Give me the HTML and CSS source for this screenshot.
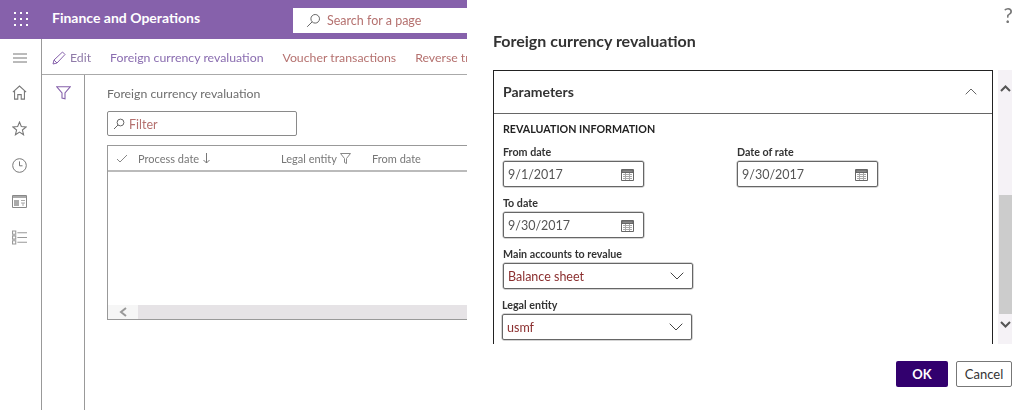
FILE: index.html
```html
<!DOCTYPE html>
<html lang="en">
<head>
<meta charset="utf-8">
<title>Foreign currency revaluation</title>
<link rel="stylesheet" href="styles.css">
</head>
<body>
<div class="app">
  <section class="left">
    <header class="topbar">
      <svg class="waffle" width="16" height="16" viewBox="0 0 16 16"><g fill="#fff"><rect x="1" y="1" width="2" height="2"/><rect x="7" y="1" width="2" height="2"/><rect x="13" y="1" width="2" height="2"/><rect x="1" y="7" width="2" height="2"/><rect x="7" y="7" width="2" height="2"/><rect x="13" y="7" width="2" height="2"/><rect x="1" y="13" width="2" height="2"/><rect x="7" y="13" width="2" height="2"/><rect x="13" y="13" width="2" height="2"/></g></svg>
      <span class="brand">Finance and Operations</span>
      <div class="search">
        <svg width="15" height="15" viewBox="0 0 15 15" fill="none" stroke="#666"><circle cx="9.2" cy="5.8" r="4.3"/><path d="M6.1 8.9 1.2 13.8"/></svg>
        <span>Search for a page</span>
      </div>
    </header>
    <div class="body">
      <nav class="rail">
        <svg class="rail-menu" width="16" height="10" viewBox="0 0 16 10" stroke="#777"><path d="M1 1h14M1 5h14M1 9h14"/></svg>
        <svg class="rail-icon" viewBox="0 0 14 14" fill="none" stroke="#777"><path d="M.8 6.6 7 1l6.2 5.6M2.4 5.400v7.800h3V9h3.200v4.200h3V5.400"/></svg>
        <svg class="rail-icon" viewBox="0 0 14 14" fill="none" stroke="#777"><path d="M7 1l1.700 4.200 4.500.3-3.500 2.900 1.100 4.400L7 10.400l-3.800 2.400 1.100-4.400L.8 5.500l4.500-.3z"/></svg>
        <svg class="rail-icon" viewBox="0 0 15 15" fill="none" stroke="#777"><circle cx="7.500" cy="7.500" r="6.800"/><path d="M7.500 3.400v4.400h3"/></svg>
        <svg class="rail-icon" viewBox="0 0 15 13" fill="none" stroke="#888"><path d="M.5.500h14v12H.5z"/><path fill="#aaa" stroke="none" d="M1 1h13v2H1zM2 5h5v6H2z"/><path stroke="#aaa" d="M9 5.500h4M9 8h4M11 8v3"/></svg>
        <svg class="rail-icon" viewBox="0 0 14 13" fill="none" stroke="#999"><path d="M.5.500h3v3h-3zM.5 5h3v3h-3zM.5 9.500h3v3h-3zM5 2h9M5 6.500h9M5 11h9"/></svg>
      </nav>
      <div class="workspace">
        <div class="actions">
          <span class="act act-edit">
            <svg width="14" height="14" viewBox="0 0 14 14" fill="none" stroke="#8661ab"><path d="M1 13l1-4L10.500 1 13 3.500 5 12z"/><path d="M2 9l3 3"/></svg>
            <span class="muted">Edit</span>
          </span>
          <span class="act purple">Foreign currency revaluation</span>
          <span class="act rose">Voucher transactions</span>
          <span class="act rose last">Reverse transaction</span>
        </div>
        <div class="page">
          <div class="filter-pane">
            <svg width="15" height="14" viewBox="0 0 15 14" fill="none" stroke="#8661ab" stroke-width="1.100"><path d="M.8.8h13.400L9 7v5.800L6 12V7z"/></svg>
          </div>
          <main class="content">
            <h2 class="page-title">Foreign currency revaluation</h2>
            <div class="filter">
              <svg width="12" height="12" viewBox="0 0 12 12" fill="none" stroke="#666"><circle cx="7.500" cy="4.500" r="3.400"/><path d="M5 7 1 11"/></svg>
              <span>Filter</span>
            </div>
            <div class="grid">
              <div class="grid-head">
                <svg class="check" width="12" height="9" viewBox="0 0 12 9" fill="none" stroke="#888"><path d="M1 5l3 3 7-7"/></svg>
                <span class="col col-process">Process date</span>
                <svg class="arrow" width="7" height="11" viewBox="0 0 7 11" fill="none" stroke="#777"><path d="M3.500 0v10M.5 7l3 3 3-3"/></svg>
                <span class="col col-legal">Legal entity</span>
                <svg class="funnel" width="11" height="11" viewBox="0 0 11 11" fill="none" stroke="#888"><path d="M.5.500h10L6.500 5.500v5l-2-1v-4z"/></svg>
                <span class="col col-from">From date</span>
              </div>
              <div class="grid-body"></div>
              <div class="hscroll">
                <div class="hscroll-btn">
                  <svg width="8" height="10" viewBox="0 0 8 10" fill="none" stroke="#999" stroke-width="2"><path d="M7 1 2 5l5 4"/></svg>
                </div>
              </div>
            </div>
          </main>
        </div>
      </div>
    </div>
  </section>

  <section class="dialog">
    <div class="help">?</div>
    <h1 class="dlg-title">Foreign currency revaluation</h1>
    <div class="dlg-main">
      <div class="panel">
        <div class="panel-head">
          <span>Parameters</span>
          <svg width="12" height="7" viewBox="0 0 12 7" fill="none" stroke="#666"><path d="M.7 6.300 6 1l5.300 5.300"/></svg>
        </div>
        <div class="panel-body">
          <h3 class="section">REVALUATION INFORMATION</h3>
          <div class="date-row">
            <div class="field">
              <label class="lbl">From date</label>
              <div class="input date"><span>9/1/2017</span>
                <svg class="cal" width="13" height="13" viewBox="0 0 13 13" fill="none" stroke="#666"><path d="M.5 1.500h12v11H.5z"/><path fill="#888" d="M1 2h11v2.500H1z"/><path stroke="#aaa" d="M2 6.500h9M2 8.500h9M2 10.500h9M4.500 5v7M8.500 5v7"/></svg>
              </div>
            </div>
            <div class="field">
              <label class="lbl">Date of rate</label>
              <div class="input date"><span>9/30/2017</span>
                <svg class="cal" width="13" height="13" viewBox="0 0 13 13" fill="none" stroke="#666"><path d="M.5 1.500h12v11H.5z"/><path fill="#888" d="M1 2h11v2.500H1z"/><path stroke="#aaa" d="M2 6.500h9M2 8.500h9M2 10.500h9M4.500 5v7M8.500 5v7"/></svg>
              </div>
            </div>
          </div>
          <div class="field">
            <label class="lbl">To date</label>
            <div class="input date"><span>9/30/2017</span>
              <svg class="cal" width="13" height="13" viewBox="0 0 13 13" fill="none" stroke="#666"><path d="M.5 1.500h12v11H.5z"/><path fill="#888" d="M1 2h11v2.500H1z"/><path stroke="#aaa" d="M2 6.500h9M2 8.500h9M2 10.500h9M4.500 5v7M8.500 5v7"/></svg>
            </div>
          </div>
          <div class="field">
            <label class="lbl">Main accounts to revalue</label>
            <div class="input select"><span>Balance sheet</span>
              <svg width="14" height="8" viewBox="0 0 14 8" fill="none" stroke="#444"><path d="M.7.700 7 7 13.300.7"/></svg>
            </div>
          </div>
          <div class="field field-shift">
            <label class="lbl">Legal entity</label>
            <div class="input select"><span>usmf</span>
              <svg width="14" height="8" viewBox="0 0 14 8" fill="none" stroke="#444"><path d="M.7.700 7 7 13.300.7"/></svg>
            </div>
          </div>
        </div>
      </div>
      <div class="vscroll">
        <svg class="v-up" width="11" height="7" viewBox="0 0 11 7" fill="none" stroke="#555" stroke-width="2"><path d="M1 6l4.500-4.500L10 6"/></svg>
        <div class="thumb"></div>
        <svg class="v-down" width="11" height="7" viewBox="0 0 11 7" fill="none" stroke="#555" stroke-width="2"><path d="M1 1l4.500 4.500L10 1"/></svg>
      </div>
    </div>
    <div class="buttons">
      <button class="btn btn-ok">OK</button>
      <button class="btn btn-cancel">Cancel</button>
    </div>
  </section>
</div>
</body>
</html>
```

FILE: styles.css
```css
* { box-sizing: border-box; }
html, body { margin: 0; padding: 0; background: #fff; }
body { width: 1024px; height: 410px; overflow: hidden; font-family: Lato, "Noto Sans", sans-serif; }
.app { display: flex; width: 1024px; height: 410px; filter: blur(0.35px); }
.left { width: 467px; height: 410px; display: flex; flex-direction: column; overflow: hidden; flex: none; }

.topbar { height: 39px; background: #8661ab; display: flex; align-items: center; flex: none; white-space: nowrap; }
.waffle { margin-left: 13px; flex: none; margin-top: -1px; }
.brand { margin-left: 23px; width: 241px; color: #fff; font-size: 14px; font-weight: 700; margin-top: -4px; flex: none; }
.search { width: 174px; height: 25px; background: #fff; display: flex; align-items: center; gap: 6px; padding-left: 13px; color: #b5716f; font-size: 12.500px; flex: none; margin-top: 1px; }

.body { flex: 1; display: flex; min-height: 0; }
.rail { width: 42px; border-right: 1px solid #999; display: flex; flex-direction: column; align-items: center; padding-right: 2px; flex: none; }
.rail-menu { margin-top: 14px; margin-bottom: 22px; }
.rail-icon { width: 15px; height: 15px; margin-bottom: 21.250px; flex: none; }

.workspace { flex: 1; display: flex; flex-direction: column; min-width: 0; }
.actions { height: 36px; padding-top: 2px; border-bottom: 1px solid #aaa; display: flex; align-items: center; font-size: 12.300px; white-space: nowrap; padding-left: 10px; flex: none; }
.act { margin-right: 19px; flex: none; }
.act-edit { display: flex; align-items: center; gap: 4px; margin-right: 19px; }
.muted { color: #8f7aa8; }
.purple { color: #8a6db0; }
.rose { color: #b5716f; }

.page { flex: 1; display: flex; min-height: 0; }
.filter-pane { width: 43px; border-right: 1px solid #999; display: flex; justify-content: center; padding-top: 11px; flex: none; }
.content { flex: 1; padding: 10px 0 0 22px; min-width: 0; }
.page-title { margin: 0; font-size: 12.300px; font-weight: 400; color: #6e6e6e; line-height: 17px; }
.filter { margin-top: 9px; width: 190px; height: 25px; padding-top: 1px; border: 1px solid #8a8a8a; border-radius: 2px; display: flex; align-items: center; gap: 4px; padding-left: 5px; color: #b5716f; font-size: 12.500px; }

.grid { margin-top: 9px; width: 380px; height: 175px; border: 1px solid #999; border-width: 1px 0 1px 1px; display: flex; flex-direction: column; }
.grid-head { height: 26px; border-bottom: 2px solid #bbb; display: flex; align-items: center; font-size: 11px; color: #777; white-space: nowrap; flex: none; }
.check { margin-left: 8px; flex: none; }
.col { flex: none; }
.col-process { margin-left: 10px; width: 60px; }
.arrow { margin-left: 5px; flex: none; }
.col-legal { margin-left: 71px; width: 56px; }
.funnel { margin-left: 3px; flex: none; }
.col-from { margin-left: 21px; }
.grid-body { flex: 1; }
.hscroll { height: 14px; background: #e6e3e6; flex: none; }
.hscroll-btn { width: 30px; height: 14px; background: #f6f6f6; display: flex; align-items: center; justify-content: center; }

.dialog { flex: 1; display: flex; flex-direction: column; padding-left: 26px; color: #333; min-width: 0; }
.help { height: 30px; padding-right: 11px; text-align: right; font-size: 21px; line-height: 30px; color: #777; }
.dlg-title { margin: 0; font-size: 16px; font-weight: 700; line-height: 21px; color: #333; }
.dlg-main { margin-top: 19px; display: flex; height: 274px; flex: none; }
.panel { width: 500px; height: 274px; overflow: hidden; border: 1.500px solid #222; border-bottom: 0; flex: none; }
.panel-head { height: 43px; padding: 0 15px 2px 9px; border-bottom: 1px solid #666; display: flex; align-items: center; justify-content: space-between; font-size: 14px; font-weight: 700; flex: none; }
.panel-body { padding: 7px 0 0 9px; }
.section { margin: 0; font-size: 10.700px; font-weight: 700; line-height: 16px; color: #222; }
.date-row { display: flex; gap: 93px; }
.field { margin-top: 8px; }
.date-row .field { margin-top: 7px; }
.field-shift { margin-left: -1px; }
.lbl { display: block; font-size: 10.700px; font-weight: 700; line-height: 15px; height: 15px; color: #333; margin-bottom: 2px; }
.input { height: 26px; border: 1px solid #666; border-radius: 2px; box-shadow: 0 0 0 .5px #aaa; display: flex; align-items: center; justify-content: space-between; font-size: 12.500px; }
.date { width: 141px; padding: 0 9px 0 4px; color: #555; }
.select { width: 190px; padding: 0 8px 0 4px; color: #8b2f2f; }
.vscroll { margin-left: 5px; width: 14px; height: 274px; background: #f5f2f6; display: flex; flex-direction: column; align-items: center; flex: none; padding-top: 15px; }
.thumb { margin-top: 103px; width: 13px; height: 119px; background: #cccccc; flex: none; }
.v-down { margin-top: 7px; }

.buttons { margin-top: 17px; display: flex; justify-content: flex-end; gap: 8px; padding-right: 12px; }
.btn { height: 26px; border-radius: 2px; font-family: inherit; font-size: 13px; padding: 0; }
.btn-ok { width: 52px; background: #32006e; color: #fff; border: 0; font-weight: 700; }
.btn-cancel { width: 56px; background: #fff; color: #333; border: 1px solid #777; }
```
